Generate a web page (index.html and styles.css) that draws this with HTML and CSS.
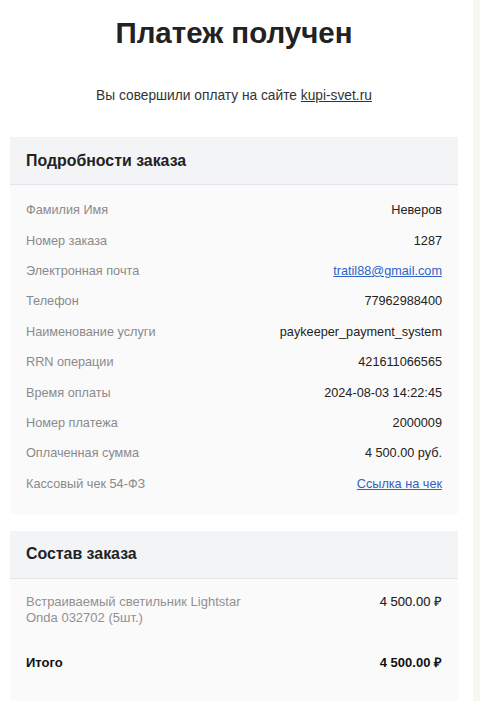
FILE: index.html
```html
<!DOCTYPE html>
<html lang="ru">
<head>
<meta charset="utf-8">
<title>Платеж получен</title>
<link rel="stylesheet" href="styles.css">
</head>
<body>
<div class="layout">
  <main class="page">
    <h1 class="title">Платеж получен</h1>
    <p class="subtitle">Вы совершили оплату на сайте <a class="site-link" href="#">kupi-svet.ru</a></p>

    <section class="card">
      <div class="card-header">Подробности заказа</div>
      <div class="card-body details">
        <div class="row"><span class="label">Фамилия Имя</span><span class="value">Неверов</span></div>
        <div class="row"><span class="label">Номер заказа</span><span class="value">1287</span></div>
        <div class="row"><span class="label">Электронная почта</span><a class="value link" href="#">tratil88@gmail.com</a></div>
        <div class="row"><span class="label">Телефон</span><span class="value">77962988400</span></div>
        <div class="row"><span class="label">Наименование услуги</span><span class="value">paykeeper_payment_system</span></div>
        <div class="row"><span class="label">RRN операции</span><span class="value">421611066565</span></div>
        <div class="row"><span class="label">Время оплаты</span><span class="value">2024-08-03 14:22:45</span></div>
        <div class="row"><span class="label">Номер платежа</span><span class="value">2000009</span></div>
        <div class="row"><span class="label">Оплаченная сумма</span><span class="value">4 500.00 руб.</span></div>
        <div class="row"><span class="label">Кассовый чек 54-ФЗ</span><a class="value link" href="#">Ссылка на чек</a></div>
      </div>
    </section>

    <section class="card">
      <div class="card-header">Состав заказа</div>
      <div class="card-body items">
        <div class="item">
          <span class="item-name">Встраиваемый светильник Lightstar<br>Onda 032702 (5шт.)</span>
          <span class="item-price">4 500.00 ₽</span>
        </div>
        <div class="total">
          <span class="total-label">Итого</span>
          <span class="total-value">4 500.00 ₽</span>
        </div>
      </div>
    </section>
  </main>
  <div class="side-strip"></div>
</div>
</body>
</html>
```

FILE: styles.css
```css
* { box-sizing: border-box; }
html, body {
  margin: 0;
  padding: 0;
  background: #ffffff;
  font-family: "Liberation Sans", Arial, sans-serif;
  color: #222;
}
.layout {
  display: flex;
  min-height: 701px;
}
.page {
  width: 468px;
  padding: 0 10px;
}
.side-strip {
  margin-left: 5px;
  width: 7px;
  background: #f7f7f2;
}
.title {
  margin: 16px 0 0;
  text-align: center;
  font-size: 29.5px;
  line-height: 34px;
  font-weight: bold;
  color: #222;
}
.subtitle {
  margin: 37px 0 0;
  text-align: center;
  font-size: 13.75px;
  line-height: 18px;
  color: #333;
}
.site-link {
  color: #333;
  text-decoration: underline;
}
.card {
  margin-top: 32px;
}
.card + .card {
  margin-top: 17px;
}
.card-header {
  height: 48px;
  padding: 0 16px;
  display: flex;
  align-items: center;
  background: #f3f4f6;
  border-bottom: 1px solid #e4e5e8;
  font-size: 15.9px;
  font-weight: bold;
  color: #222;
}
.card-body {
  background: #fafafa;
  padding: 0 16px;
}
.details {
  padding-top: 10px;
  padding-bottom: 15px;
}
.row {
  display: flex;
  justify-content: space-between;
  align-items: center;
  height: 30.4px;
  font-size: 12.7px;
}
.label {
  color: #8a8a8a;
}
.value {
  color: #222;
}
.link {
  color: #2f64c4;
  text-decoration: underline;
}
.items {
  padding-top: 15px;
  padding-bottom: 40px;
}
.item {
  display: flex;
  justify-content: space-between;
  align-items: flex-start;
  font-size: 13px;
  line-height: 16px;
}
.item-name {
  color: #919191;
}
.item-price {
  font-weight: normal;
  color: #222;
  -webkit-text-stroke: 0.12px #222;
}
.total {
  margin-top: 29px;
  display: flex;
  justify-content: space-between;
  align-items: center;
  line-height: 16px;
  font-size: 13px;
  font-weight: bold;
  color: #111;
}
```
